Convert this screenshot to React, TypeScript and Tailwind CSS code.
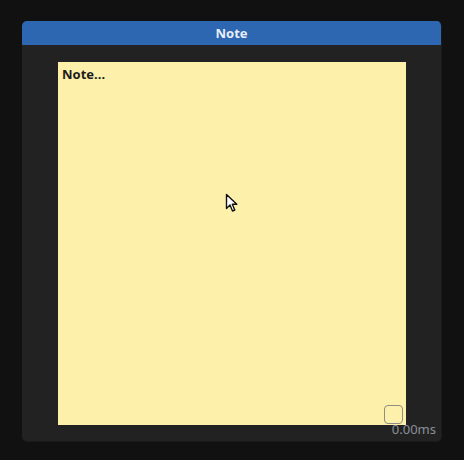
export default function App() {
  return (
    <div className="w-[464px] h-[460px] bg-[#111111] pt-[21px] pl-[22px] font-['Noto_Sans',sans-serif]">
      <div className="w-[420px] h-[421px] rounded-[5px] bg-[#222223] flex flex-col overflow-hidden border-r border-b border-[#1a1a1b]">
        {/* Title bar */}
        <div className="h-6 flex-none bg-[#2d67b2] text-center text-[13px] font-bold leading-6 text-[#e9eef6]">
          Note
        </div>

        {/* Note body */}
        <div className="relative flex-1 pl-9 pr-[35px] pt-[17px] pb-[16px]">
          <div className="relative h-full bg-[#fdf0aa] px-1 pt-[4px]">
            <div className="text-[13px] font-bold leading-4 text-[#1c1c1c]">Note...</div>
            <svg className="absolute left-[167px] top-[131px]" width="13" height="20" viewBox="0 0 13 20">
              <path d="M1.5 1.5 L1.5 15.5 L5 12 L7.5 18 L9.8 17 L7.3 11.3 L11.8 11.3 Z" fill="#ffffff" stroke="#111111" strokeWidth="1.4" strokeLinejoin="round" />
            </svg>
          </div>
          <div className="absolute right-[38px] bottom-[17px] w-[19px] h-[19px] rounded-[4px] border border-[#8e8c83]" />
          <div className="absolute right-[5px] bottom-[4px] text-[13px] leading-4 text-[#8b9097]">0.00ms</div>
        </div>
      </div>
    </div>
  )
}
